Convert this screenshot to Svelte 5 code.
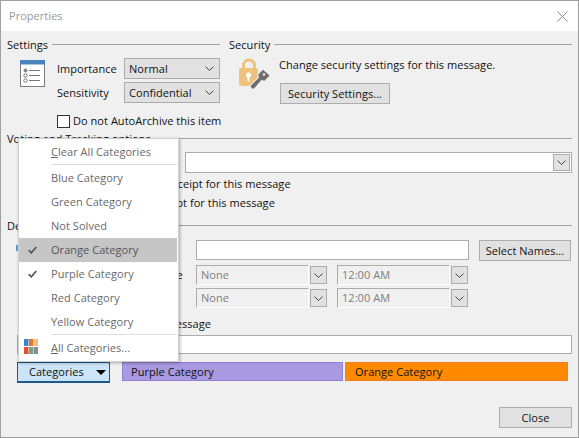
<script>
  const menuTop = ['Blue Category', 'Green Category', 'Not Solved', 'Orange Category', 'Purple Category', 'Red Category', 'Yellow Category'];
  const checked = ['Orange Category', 'Purple Category'];
</script>

{#snippet chevron()}
  <svg class="chev" width="9" height="5" viewBox="0 0 9 5"><path d="M.5.500l4 4 4-4" fill="none" stroke="#444" stroke-width="1"/></svg>
{/snippet}

<div class="win">
  <header class="title">
    <span>Properties</span>
    <svg width="11" height="11" viewBox="0 0 11 11"><path d="M.5.5l10 10M10.5.5l-10 10" stroke="#8c8c8c" stroke-width="1" fill="none"/></svg>
  </header>

  <main class="content">
    <div class="top">
      <section class="settings">
        <div class="head"><span>Settings</span><i></i></div>
        <div class="settings-body">
          <svg class="list-ico" width="25" height="27" viewBox="0 0 25 27">
            <rect x=".5" y=".5" width="24" height="26" fill="#fff" stroke="#7b7b7b"/>
            <rect width="25" height="4.5" fill="#4a83bd"/>
            <circle cx="5.5" cy="10.5" r="2" fill="#888"/>
            <circle cx="5.5" cy="15.5" r="1.7" fill="#fff" stroke="#777"/>
            <circle cx="5.5" cy="20.5" r="1.7" fill="#fff" stroke="#777"/>
            <path d="M9 10.5h11M9 15.5h11M9 20.5h11" stroke="#777" stroke-width="1"/>
          </svg>
          <div class="fields">
            <label for="imp">Importance</label>
            <div class="sel" id="imp">Normal{@render chevron()}</div>
            <label for="sen">Sensitivity</label>
            <div class="sel" id="sen">Confidential{@render chevron()}</div>
          </div>
        </div>
        <div class="check auto"><b class="box"></b>Do not AutoArchive this item</div>
      </section>

      <section class="security">
        <div class="head"><span>Security</span><i></i></div>
        <div class="security-body">
          <svg class="lock-ico" width="32" height="32" viewBox="0 0 32 32">
            <path d="M4.500 11V7.500a5.500 5.500 0 0 1 11 0V11" fill="none" stroke="#eec17d" stroke-width="3"/>
            <rect x="0" y="10" width="19" height="18" rx="2" fill="#eec17d"/>
            <circle cx="9.500" cy="17" r="2.600" fill="#fff"/>
            <rect x="8.500" y="18" width="2" height="5.500" fill="#fff"/>
            <path d="M11 32l-1-4 9-9-1-3 6-6 8 7-6 7-3-1-8 9z" fill="#f0f0f0"/>
            <path d="M13 30.500l-1.500-2.500 8.500-8.500-.8-3 4.800-4.800 6.500 5.800-5 5.300-3-.8-7.500 8.500z" fill="#6f6f6f"/>
            <circle cx="25" cy="16.500" r="1.200" fill="#f0f0f0"/>
          </svg>
          <div class="sec-text">
            <p>Change security settings for this message.</p>
            <div class="btn sec-btn">Security Settings...</div>
          </div>
        </div>
      </section>
    </div>

    <section class="voting">
      <div class="head"><span>Voting and Tracking options</span><i></i></div>
      <div class="vote-row">
        <div class="check vote-check"><b class="box"></b>Use voting buttons</div>
        <div class="combo"><span class="combo-btn">{@render chevron()}</span></div>
      </div>
      <div class="check track first"><b class="box"></b>Request a Delivery Receipt for this message</div>
      <div class="check track"><b class="box"></b>Request a Read Receipt for this message</div>
    </section>

    <section class="delivery">
      <div class="head"><span>Delivery options</span><i></i></div>
      <div class="reply-row">
        <svg class="deliv-ico" width="8" height="6" viewBox="0 0 8 6"><rect width="8" height="6" fill="#5a9bd5"/></svg>
        <div class="check side reply-side"><b class="box"></b>Have replies sent to</div>
        <div class="input reply"></div>
        <div class="btn names">Select Names...</div>
      </div>
      <div class="date-row one">
        <div class="check side"><b class="box"></b>Do not deliver before</div>
        <div class="dis">None</div><span class="mini">{@render chevron()}</span>
        <div class="dis time">12:00 AM</div><span class="mini">{@render chevron()}</span>
      </div>
      <div class="date-row two">
        <div class="check side"><b class="box"></b>Expires after</div>
        <div class="dis">None</div><span class="mini">{@render chevron()}</span>
        <div class="dis time">12:00 AM</div><span class="mini">{@render chevron()}</span>
      </div>
      <div class="check save"><b class="box"></b>Save copy of sent message</div>
      <div class="contact-row">
        <div class="btn contacts">Contacts...</div>
        <div class="input contact"></div>
      </div>
      <div class="cat-row">
        <div class="cat-btn"><span>Cate<u>g</u>ories</span><em></em></div>
        <div class="tag purple">Purple Category</div>
        <div class="tag orange">Orange Category</div>
      </div>
    </section>

    <footer class="foot"><div class="btn close">Close</div></footer>
  </main>

  <nav class="menu">
    <div class="item"><span><u>C</u>lear All Categories</span></div>
    <hr class="upper" />
    {#each menuTop as name}
      <div class="item" class:active={name === 'Orange Category'}>
        {#if checked.includes(name)}
          <svg class="tick" width="9" height="8" viewBox="0 0 9 8"><path d="M.7 4.200l2.600 2.600L8.300 1" fill="none" stroke="#555" stroke-width="1.700"/></svg>
        {/if}
        <span>{name}</span>
      </div>
    {/each}
    <hr />
    <div class="item last">
      <svg class="tick grid-ico" width="14" height="15" viewBox="0 0 14 15">
        <rect width="4.500" height="7" fill="#4a7fc1"/><rect x="5" width="4.500" height="7" fill="#e8762c"/><rect x="10" width="4" height="7" fill="#e8c07f"/>
        <rect y="8" width="4.500" height="7" fill="#d9542b"/><rect x="5" y="8" width="4.500" height="7" fill="#6fa48f"/><rect x="10" y="8" width="4" height="7" fill="#8a8a8a"/>
      </svg>
      <span><u>A</u>ll Categories...</span>
    </div>
  </nav>
</div>

<style>
  :global(body) { margin: 0; background: #f0f0f0; }
  .win {
    position: relative; width: 579px; height: 438px; box-sizing: border-box; overflow: hidden;
    border: 1px solid #a0a0a0; background: #f0f0f0; color: #111;
    font: 11px/16px "Open Sans", sans-serif; letter-spacing: .04px; display: flex; flex-direction: column;
  }
  .title { height: 30px; flex: none; background: #fff; display: flex; align-items: center; justify-content: space-between; padding: 0 10px 0 8px; color: #999; }
  .content { flex: 1; padding: 6px 6px 0; display: flex; flex-direction: column; }
  .head { display: flex; align-items: center; height: 16px; gap: 4px; }
  .head i { flex: 1; height: 1px; margin-top: -1px; background: #a3a3a3; }
  .top { display: grid; grid-template-columns: 213px 1fr; column-gap: 9px; height: 94px; }
  .settings-body { display: flex; margin-top: 5px; }
  .list-ico { margin: 2px 12px 0 13px; flex: none; }
  .fields { display: grid; grid-template-columns: 67px 96px; grid-auto-rows: 21px; row-gap: 3px; align-items: center; }
  label { display: block; }
  .sel { height: 21px; box-sizing: border-box; border: 1px solid #acacac; background: #e1e1e1; display: flex; align-items: center; justify-content: space-between; padding: 0 5px 0 4px; }
  .check { display: flex; align-items: center; gap: 3px; white-space: nowrap; }
  .box { width: 13px; height: 13px; box-sizing: border-box; border: 1px solid #333; background: #fff; flex: none; }
  .auto { margin: 10px 0 0 50px; }
  .security-body { display: flex; margin-top: 5px; }
  .lock-ico { margin: 0 8px 0 10px; flex: none; }
  .sec-text { flex: 1; }
  .sec-text p { margin: 0; line-height: 14px; }
  .btn { box-sizing: border-box; border: 1px solid #adadad; background: #e1e1e1; display: flex; align-items: center; justify-content: center; white-space: nowrap; }
  .sec-btn { width: 110px; height: 21px; margin: 11px 0 0 1px; }
  .vote-row { display: flex; margin-top: 5px; height: 21px; align-items: center; }
  .vote-check { width: 178px; padding-left: 50px; box-sizing: border-box; flex: none; }
  .combo { flex: 1; height: 21px; box-sizing: border-box; border: 1px solid #acacac; background: #fff; display: flex; justify-content: flex-end; padding: 1px; }
  .combo-btn { width: 17px; background: #e1e1e1; border: 1px solid #acacac; box-sizing: border-box; display: flex; align-items: center; justify-content: center; }
  .track { height: 19px; padding-left: 43px; }
  .track.first { margin-top: 1px; }
  .delivery { margin-top: 6px; }
  .side { width: 189px; padding-left: 50px; box-sizing: border-box; flex: none; }
  .reply-row { display: flex; align-items: flex-start; margin-top: 6px; height: 21px; }
  .deliv-ico { flex: none; margin: 5px 0 0 9px; }
  .side.reply-side { width: 172px; padding-left: 33px; }
  .input { box-sizing: border-box; border: 1px solid #acacac; background: #fff; }
  .reply { width: 273px; height: 20px; }
  .names { width: 92px; height: 21px; margin-left: 10px; }
  .date-row { display: flex; align-items: center; height: 20px; }
  .date-row.one { margin-top: 4px; }
  .date-row.two { margin-top: 3px; }
  .dis { width: 113px; height: 20px; box-sizing: border-box; border: 1px solid; border-color: #acacac #fff #fff #acacac; color: #7d7d7d; padding-left: 4px; display: flex; align-items: center; }
  .time { margin-left: 10px; }
  .mini { width: 17px; height: 18px; margin-left: 1px; box-sizing: border-box; background: #e1e1e1; border: 1px solid #acacac; display: flex; align-items: center; justify-content: center; }
  .save { margin: 8px 0 0 50px; height: 16px; }
  .contact-row { display: flex; margin-top: 3px; height: 19px; gap: 11px; padding-left: 10px; }
  .contacts { width: 94px; height: 19px; flex: none; }
  .contact { flex: 1; height: 19px; }
  .cat-row { display: flex; margin-top: 8px; padding-left: 10px; height: 21px; }
  .cat-btn { width: 93px; height: 21px; box-sizing: border-box; border: 2px solid #1a5a8c; border-width: 1px 1px 2px; background: #cce4f7; display: flex; align-items: center; justify-content: space-between; padding: 0 3px 0 11px; flex: none; }
  .cat-btn em { width: 0; height: 0; border: 5px solid transparent; border-top: 5px solid #000; border-bottom: 0; }
  .tag { height: 19px; box-sizing: border-box; border: 1px solid; display: flex; align-items: center; padding-left: 8px; width: 221px; }
  .purple { margin-left: 12px; background: #a899e0; border-color: #8f80d6; }
  .orange { margin-left: 2px; width: 223px; background: #ff8a00; border-color: #f97a1f; padding-left: 9px; }
  .foot { display: flex; justify-content: flex-end; margin-top: 24px; }
  .close { width: 73px; height: 21px; }
  .menu {
    position: absolute; left: 17px; top: 137px; width: 161px; height: 224px; box-sizing: border-box; padding: 1px 1px 1px 0;
    background: #fff; border: 1px solid #d0d0d0; box-shadow: 1px 1px 3px rgba(0,0,0,.3); color: #6a6a6a;
  }
  .item { position: relative; height: 24px; display: flex; align-items: center; padding-left: 32px; }
  .item.active { background: #c6c6c6; color: #555; }
  .item.last { padding-top: 2px; box-sizing: border-box; }
  .menu hr { margin: 0 0 0 32px; height: 1px; border: 0; background: #dedede; }
  .menu hr.upper { margin-bottom: 1px; }
  .tick { position: absolute; left: 9px; top: 8px; }
  .grid-ico { left: 5px; top: 4px; }
</style>
